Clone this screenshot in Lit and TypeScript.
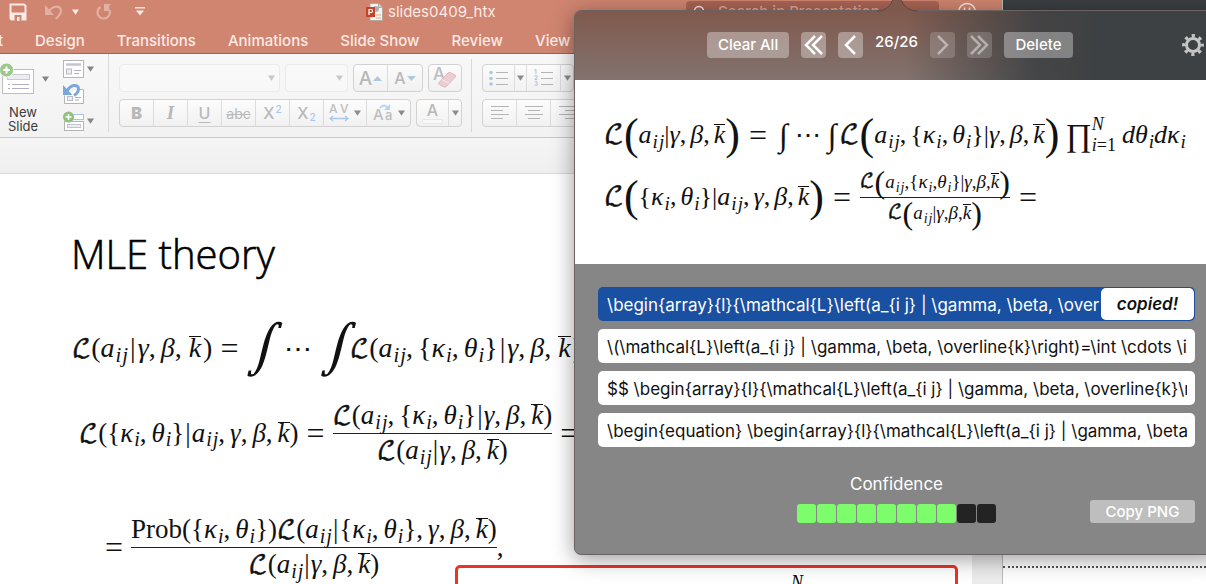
import { LitElement, html, css, svg, nothing, TemplateResult } from "lit";
import { customElement, property } from "lit/decorators.js";

type Part = TemplateResult | string;

/* ---------- math building blocks ---------- */
const sub = (base: Part, idx: string) => html`<i>${base}</i><sub>${idx}</sub>`;
const L = html`<span class="cal">ℒ</span>`;
const comma = html`<span class="comma">,</span>`;
const kbar = html`<span class="kbar"><i>k</i></span>`;
const bar = html`<span class="vbar">|</span>`;
const aij = html`<i>a</i><sub>i</sub><sub>j</sub>`;
const gbk = html`<i>γ</i>${comma}<i>β</i>${comma}${kbar}`;
const kt = html`<span class="brace">{</span>${sub("κ", "i")}${comma}${sub("θ", "i")}<span class="brace">}</span>`;
const t = (p: Part) => html`<span class="t">${p}</span>`;
const rel = html`<span class="rel">=</span>`;
const frac = (n: Part, d: Part) => html`<span class="frac"><span class="num">${n}</span><span class="den">${d}</span></span>`;
const op = html`<span class="big">(</span>`;
const cp = html`<span class="big">)</span>`;
const dots = html`<span class="dots">⋯</span>`;
const int = html`<span class="int">∫</span>`;

const mathStyles = css`
  .eq { display: flex; align-items: center; white-space: nowrap; font-family: "Liberation Serif", serif; color: #111; }
  .t { line-height: 1; }
  sub { font-size: 0.74em; vertical-align: -0.25em; line-height: 0; font-style: italic; margin-left: 1px; }
  .cal { font-family: "DejaVu Math TeX Gyre", "DejaVu Serif", serif; line-height: 0; -webkit-text-stroke: 0.5px #111; }
  .frac { display: flex; flex-direction: column; align-items: center; }
  .num, .den { display: flex; align-items: center; align-self: stretch; justify-content: center; }
  .num { border-bottom: 1px solid #222; }
  .kbar { display: inline-block; border-top: 1px solid #111; line-height: 0.8; }
`;

@customElement("caret-down")
class CaretDown extends LitElement {
  static styles = css`
    :host { display: inline-flex; }
    svg { display: block; }
  `;
  render() {
    return html`<svg width="7" height="6" viewBox="0 0 7 6"><path d="M0 .5h7L3.5 5.8z" fill="currentColor" /></svg>`;
  }
}

@customElement("ppt-ribbon")
class PptRibbon extends LitElement {
  static styles = css`
    :host { display: flex; height: 84px; box-sizing: border-box; border-bottom: 1px solid #c6c6c6; background: linear-gradient(#f8f8f8, #f2f2f2); font-family: Inter, sans-serif; color: #b8b8b8; overflow: hidden; }
    button { font: inherit; color: inherit; background: none; border: 0; padding: 0; margin: 0; display: flex; align-items: center; justify-content: center; }
    svg { display: block; overflow: visible; }
    .new { width: 56px; padding-top: 8px; display: grid; grid-template-columns: 38px 1fr; align-content: start; color: #3b3b3b; font-size: 13px; line-height: 14px; }
    .new .lab { grid-column: 1 / 3; width: 46px; text-align: center; padding-top: 10px; }
    .new caret-down { align-self: center; padding-left: 4px; color: #858585; }
    .slides { display: flex; flex-direction: column; gap: 5px; padding: 4px 16px 0 7px; border-right: 1px solid #d9d9d9; margin: 0 10px 5px 0; width: 29px; }
    .slides button { gap: 3px; height: 22px; justify-content: flex-start; color: #858585; }
    .rows { display: flex; flex-direction: column; gap: 7px; padding-top: 10px; }
    .row { display: flex; gap: 5px; }
    .grp { display: flex; height: 28px; box-sizing: border-box; border: 1px solid #d2d2d2; border-radius: 4px; background: linear-gradient(#fcfcfc, #f1f1f1); }
    .grp button { width: 34px; box-sizing: border-box; border-right: 1px solid #dcdcdc; font-size: 16px; font-weight: 600; gap: 5px; }
    .grp button:last-child { border-right: 0; }
    .grp .wide { width: 43px; }
    .grp .cart { width: 12px; color: #8c8c8c; }
    .grp .dark { color: #8c8c8c; }
    .grp .solo { width: 32px; }
    .combo { height: 28px; box-sizing: border-box; appearance: none; border: 1px solid #e6e6e6; border-radius: 4px; background: #fafafa; width: 100%; }
    .combo-wrap { display: grid; width: 161px; }
    .combo-wrap.small { width: 63px; }
    .combo-wrap > * { grid-area: 1 / 1; }
    .combo-wrap caret-down { justify-self: end; align-self: center; padding-right: 5px; color: #c8c8c8; z-index: 1; }
    .grp .it { font-family: "Liberation Serif", serif; font-style: italic; font-size: 19px; }
    .grp .u { text-decoration: underline; text-underline-offset: 3px; font-weight: 500; }
    .grp .s { text-decoration: line-through; font-size: 14px; font-weight: 400; }
    .grp .x { font-weight: 500; gap: 1px; }
    .grp .lg { font-size: 19px; font-weight: 500; gap: 1px; }
    .sx { font-size: 10px; color: #a9c8ee; align-self: flex-start; padding-top: 3px; }
    .sb { font-size: 10px; color: #a9c8ee; align-self: flex-end; padding-bottom: 3px; }
    .grp .md { font-size: 16px; font-weight: 500; gap: 1px; }
    .ink { display: grid; justify-items: center; line-height: 16px; }
    .ink svg { margin-top: 1px; }
    .para { border-left: 1px solid #d9d9d9; margin: 5px 0 5px 9px; padding: 5px 0 0 10px; }
  `;

  private lines(kind: "left" | "center" | "right") {
    const w = [18, 12, 18, 12];
    return svg`${w.map((n, i) => {
      const x = kind === "left" ? 0 : kind === "center" ? (18 - n) / 2 : 18 - n;
      return svg`<path d="M${x} ${1.5 + i * 4}h${n}" stroke="#b5b5b5" />`;
    })}`;
  }

  render() {
    return html`
      <button class="new">
        <svg width="36" height="33" viewBox="0 0 36 33">
          <rect x="2.5" y="7.500" width="31" height="24" fill="#fff" stroke="#bdbdbd" />
          <rect x="7.500" y="12.500" width="22" height="5" fill="#ececf2" stroke="#c9c9d2" />
          <path d="M8 22.500h2M12 22.500h17M8 26.500h2M12 26.500h17" stroke="#b4afc0" />
          <circle cx="6.500" cy="8" r="7" fill="#9dc88d" stroke="#f8f8f8" />
          <path d="M6.500 4.500v7M3 8h7" stroke="#fff" stroke-width="2" />
        </svg>
        <caret-down></caret-down>
        <span class="lab">New<br />Slide</span>
      </button>
      <div class="slides">
        <button aria-label="Layout">
          <svg width="21" height="18" viewBox="0 0 21 18"><rect x=".5" y=".5" width="20" height="17" fill="#fff" stroke="#b5b5b5" /><path d="M3 4.500h15" stroke="#c4c4cf" stroke-width="2.500" /><rect x="3.500" y="9" width="5" height="5" fill="#ececf2" stroke="#bcbcc8" /><path d="M11 10.500h7M11 13.500h5" stroke="#b4afc0" /></svg>
          <caret-down></caret-down>
        </button>
        <button aria-label="Reset">
          <svg width="21" height="21" viewBox="0 0 21 21"><path d="M16 5.500h4.500v14h-19v-8" fill="#fff" stroke="#b5b5b5" /><rect x="4.500" y="12.500" width="5" height="4" fill="#ececf2" stroke="#bcbcc8" /><path d="M12 13.500h6M12 16h4" stroke="#b4afc0" /><path d="M4 7.500C7 .5 15.500-.5 15.500 5c0 3-2 5-4.500 6.500" fill="none" stroke="#7aa7e0" stroke-width="3" /><path d="M0 1v10h9.500z" fill="#7aa7e0" /></svg>
        </button>
        <button aria-label="Section">
          <svg width="21" height="21" viewBox="0 0 21 21"><rect x="9.500" y="3.500" width="11" height="5" fill="#fff" stroke="#a9c5ea" /><rect x="1.500" y="10.500" width="19" height="9" fill="#fff" stroke="#b5b5b5" /><rect x="4.500" y="13.500" width="13" height="3" fill="#ececf2" stroke="#c4c4cf" /><circle cx="5.500" cy="6" r="5.500" fill="#8fc07e" /><path d="M5.500 3v6M2.500 6h6" stroke="#fff" stroke-width="1.600" /></svg>
          <caret-down></caret-down>
        </button>
      </div>
      <div class="rows">
        <div class="row">
          <span class="combo-wrap"><select class="combo" aria-label="Font" disabled></select><caret-down></caret-down></span>
          <span class="combo-wrap small"><select class="combo" aria-label="Font size" disabled></select><caret-down></caret-down></span>
          <div class="grp">
            <button class="lg" aria-label="Increase font size">A<svg width="9" height="5"><path d="M0 5h9L4.500 0z" fill="#a9c8ee" /></svg></button>
            <button class="md" aria-label="Decrease font size">A<svg width="9" height="5"><path d="M0 0h9L4.500 5z" fill="#abcbe0" /></svg></button>
          </div>
          <div class="grp">
            <button class="solo" aria-label="Clear formatting">
              <svg width="24" height="24" viewBox="0 0 24 24"><text x="0" y="14" font-size="17" font-weight="500" fill="#bdbdbd">A</text><path d="M6 16.500l9-9.500q1-1 2-.5l5 2.500q1 1 .3 2l-9 9.500q-1 1-2 .5l-5-2.500q-1-1-.3-2z" fill="#eccdd2" stroke="#dcb7be" /><path d="M9 13.500l7 4" stroke="#f8e8ea" /></svg>
            </button>
          </div>
        </div>
        <div class="row">
          <div class="grp">
            <button aria-label="Bold"><b>B</b></button>
            <button class="it" aria-label="Italic">I</button>
            <button class="u" aria-label="Underline">U</button>
            <button class="s" aria-label="Strikethrough">abc</button>
            <button class="x" aria-label="Superscript">X<span class="sx">2</span></button>
            <button class="x" aria-label="Subscript">X<span class="sb">2</span></button>
            <button class="wide" aria-label="Character spacing">
              <svg width="20" height="20" viewBox="0 0 20 20"><text x="0" y="10" font-size="12" font-weight="500" fill="#bdbdbd">A</text><text x="11" y="10" font-size="12" font-weight="500" fill="#bdbdbd">V</text><path d="M1 15.500h18M4 13l-3 2.500 3 2.500M16 13l3 2.500-3 2.500" fill="none" stroke="#a9c8ee" stroke-width="1.300" /></svg>
              <caret-down class="dark"></caret-down>
            </button>
            <button class="wide" aria-label="Change case">
              <svg width="20" height="20" viewBox="0 0 20 20"><text x="0" y="17" font-size="15" font-weight="500" fill="#bdbdbd">A</text><text x="12" y="17" font-size="13" font-weight="500" fill="#bdbdbd">a</text><path d="M7 5q4-5 8 0" fill="none" stroke="#b9d2ef" stroke-width="2" /><path d="M17 1v6h-6z" fill="#b9d2ef" /></svg>
              <caret-down class="dark"></caret-down>
            </button>
          </div>
          <div class="grp">
            <button class="solo md" aria-label="Font colour"><span class="ink">A<svg width="21" height="5"><rect x=".5" y=".5" width="20" height="4" rx="1" fill="#f8f8f8" stroke="#e6e6e6" /></svg></span></button>
            <button class="cart" aria-label="Font colour options"><caret-down></caret-down></button>
          </div>
        </div>
      </div>
      <div class="rows para">
        <div class="row">
          <div class="grp">
            <button class="solo" aria-label="Bullets"><svg width="20" height="16" viewBox="0 0 20 16"><circle cx="2" cy="2.500" r="1.800" fill="#a9c8ee" /><circle cx="2" cy="8.500" r="1.800" fill="#a9c8ee" /><circle cx="2" cy="14" r="1.800" fill="#a9c8ee" /><path d="M7 2.500h12M7 8.500h12M7 14.500h12" stroke="#b5b5b5" /></svg></button>
            <button class="cart" aria-label="Bullet options"><caret-down></caret-down></button>
            <button aria-label="Numbering"><svg width="20" height="18" viewBox="0 0 20 18"><g font-size="6" font-weight="700" fill="#a9c8ee"><text x="0" y="5">1</text><text x="0" y="11">2</text><text x="0" y="17">3</text></g><path d="M7 3.500h12M7 9.500h12M7 15.500h12" stroke="#b5b5b5" /></svg></button>
            <button class="cart" aria-label="Numbering options"><caret-down></caret-down></button>
          </div>
        </div>
        <div class="row">
          <div class="grp">
            ${(["left", "center", "right"] as const).map((k) => html`<button aria-label="Align ${k}"><svg width="18" height="16" viewBox="0 0 18 16">${this.lines(k)}</svg></button>`)}
          </div>
        </div>
      </div>
    `;
  }
}

@customElement("slide-canvas")
class SlideCanvas extends LitElement {
  static styles = [
    mathStyles,
    css`
      :host { display: block; position: relative; flex: 1; background: #fff; overflow: hidden; }
      h1 { margin: 0; padding: 55px 0 0 71px; font: 300 40px/50px "Open Sans", sans-serif; color: #000; -webkit-text-stroke: 0.6px #000; }
      .eq { font-size: 27px; height: 60px; }
      .one { margin: 39px 0 25px 72px; font-size: 28px; }
      .two { margin: 0 0 54px 79px; }
      .three { margin: 0 0 0 97px; }
      .cal { font-size: 25px; }
      .comma { margin-right: 5px; }
      .vbar { margin: 0 1px; }
      .rel { margin: 0 8px; font-size: 32px; }
      .one .vbar, .one .kbar { margin: 0 2px; }
      .int { font-family: "DejaVu Math TeX Gyre", serif; font-style: italic; font-size: 50px; line-height: 60px; }
      .dots { margin: 0 8px; }
      .num, .den { height: 34px; }
      .box { position: absolute; left: 455px; top: 391px; right: 14px; height: 90px; box-sizing: border-box; border: 3px solid #e8352a; border-radius: 5px; background: #fff; padding: 4px 0 0 333px; font: italic 18px/20px "Liberation Serif", serif; }
    `,
  ];
  render() {
    return html`
      <h1>MLE theory</h1>
      <div class="eq one">${t(html`${L}(${aij}${bar}${gbk})`)}${rel}${int}${dots}${int}${t(html`${L}(${aij}${comma}${kt}${bar}${gbk})`)}</div>
      <div class="eq two">${t(html`${L}(${kt}${bar}${aij}${comma}${gbk})`)}${rel}${frac(t(html`${L}(${aij}${comma}${kt}${bar}${gbk})`), t(html`${L}(${aij}${bar}${gbk})`))}${rel}</div>
      <div class="eq three">${rel}${frac(t(html`Prob(${kt})${L}(${aij}${bar}${kt}${comma}${gbk})`), t(html`${L}(${aij}${bar}${gbk})`))}${comma}</div>
      <div class="box">N</div>
    `;
  }
}

@customElement("snip-popover")
class SnipPopover extends LitElement {
  @property({ type: Number }) confidence = 8;

  private rows = [
    "\\begin{array}{l}{\\mathcal{L}\\left(a_{i j} | \\gamma, \\beta, \\overline{k}\\right)=\\int \\cdots",
    "\\(\\mathcal{L}\\left(a_{i j} | \\gamma, \\beta, \\overline{k}\\right)=\\int \\cdots \\int",
    "$$ \\begin{array}{l}{\\mathcal{L}\\left(a_{i j} | \\gamma, \\beta, \\overline{k}\\right)=\\int",
    "\\begin{equation} \\begin{array}{l}{\\mathcal{L}\\left(a_{i j} | \\gamma, \\beta, \\overline{k}\\right)",
  ];

  static styles = [
    mathStyles,
    css`
      :host { display: block; box-sizing: border-box; border: 1px solid #6b6361; border-radius: 7px; background: #868686; box-shadow: 0 4px 22px rgba(0, 0, 0, 0.4); font-family: Inter, sans-serif; }
      .tip { position: absolute; left: 302px; top: -11px; display: block; }
      header { display: grid; grid-template-columns: 1fr auto 1fr; align-items: center; height: 69px; box-sizing: border-box; padding: 0 14px 2px 0; border-radius: 6px 0 0 0; background: linear-gradient(90deg, rgba(62, 65, 67, 0) 330px, rgba(62, 65, 67, 0.900) 460px, #3e4143 520px), linear-gradient(#80594d, #82736f); }
      .nav { grid-column: 2; display: flex; align-items: center; gap: 12px; color: #fff; font-size: 16px; font-weight: 500; }
      button { font: inherit; color: #fff; border: 0; padding: 0; border-radius: 4px; background: rgba(255, 255, 255, 0.340); height: 26px; display: flex; align-items: center; justify-content: center; }
      .clear { width: 82px; }
      .del { width: 69px; }
      .clear, .del { font-size: 15px; }
      .sq { width: 25px; }
      .sq[disabled] { background: rgba(255, 255, 255, 0.200); opacity: 0.9; }
      .sq[disabled] path { opacity: 0.5; }
      .count { font-size: 15px; padding-bottom: 6px; }
      .gear { background: none; justify-self: end; }
      svg { display: block; }
      .preview { background: #fff; height: 184px; box-sizing: border-box; padding: 24px 0 0 29px; }
      .preview .eq { font-size: 26px; height: 62px; }
      .big { font-size: 44px; line-height: 50px; }
      .comma { margin-right: 4px; }
      .rel { margin: 0 9px; font-size: 32px; }
      .frac { font-size: 19px; }
      .num, .den { height: 30px; }
      .frac .comma { margin-right: 0; }
      .frac .big { font-size: 32px; line-height: 30px; }
      .int { font-size: 32px; margin: 0 3px; }
      .dots { margin: 0 4px; }
      .prod { font-size: 32px; margin-left: 6px; }
      .lim { display: flex; flex-direction: column; font-size: 18px; line-height: 21px; margin-right: 6px; }
      .body { padding: 23px 24px 0 23px; }
      .codes { display: grid; gap: 8px; }
      .code { display: flex; height: 34px; border-radius: 5px; background: #fff; overflow: hidden; }
      .code input { flex: 1; min-width: 0; border: 0; padding: 1px 0 0; margin: 0 8px 0 9px; background: none; color: #111; font: 17px/34px Inter, sans-serif; outline: 0; }
      .on { background: #1a50a2; }
      .code.on input { color: #fff; margin-right: 0; }
      .badge { width: 93px; margin: 1px; border-radius: 5px; background: #fff; color: #111; font-size: 17px; line-height: 32px; font-weight: 600; font-style: italic; text-align: center; }
      footer { display: grid; grid-template-columns: 1fr auto 1fr; align-items: end; padding-top: 25px; color: #fff; }
      .conf { grid-column: 2; display: grid; gap: 8px; justify-items: center; font-size: 17px; line-height: 24px; }
      .meter { display: flex; gap: 1px; }
      .seg { width: 19px; height: 19px; border-radius: 3px; background: #232323; }
      .seg.full { background: #7dfc6c; }
      .png { justify-self: end; width: 105px; height: 23px; font-size: 15px; font-weight: 500; background: #bfbebe; border-radius: 3px; }
    `,
  ];

  private arrow(d: string) {
    return html`<svg width="23" height="24" viewBox="0 0 23 24"><path d=${d} fill="none" stroke="#fff" stroke-width="2.500" /></svg>`;
  }

  render() {
    return html`
      <svg class="tip" width="40" height="12" viewBox="0 0 40 12"><path d="M0 12Q8 12 13 5L16 0H24L27 5Q32 12 40 12z" fill="#80594d" /><path d="M0 11Q8 11 13 5L16 0M24 0L27 5Q32 11 40 11" fill="none" stroke="#5d4640" /></svg>
      <header>
        <div class="nav">
          <button class="clear">Clear All</button>
          <button class="sq" aria-label="First">${this.arrow("M13 3L4 12L13 21M20 3L11 12L20 21")}</button>
          <button class="sq" aria-label="Previous">${this.arrow("M16 3L7 12L16 21")}</button>
          <span class="count">26/26</span>
          <button class="sq" aria-label="Next" disabled>${this.arrow("M7 3L16 12L7 21")}</button>
          <button class="sq" aria-label="Last" disabled>${this.arrow("M3 3L12 12L3 21M10 3L19 12L10 21")}</button>
          <button class="del">Delete</button>
        </div>
        <button class="gear" aria-label="Settings">
          <svg width="24" height="24" viewBox="0 0 24 24" fill="none" stroke="#c4c5c6"><circle cx="12" cy="12" r="6.500" stroke-width="3" /><circle cx="12" cy="12" r="9.200" stroke-width="3.400" stroke-dasharray="3.200 4.025" stroke-dashoffset="1.600" /></svg>
        </button>
      </header>
      <div class="preview">
        <div class="eq">${L}${op}${t(html`${aij}${bar}${gbk}`)}${cp}${rel}${int}${dots}${int}${L}${op}${t(html`${aij}${comma}${kt}${bar}${gbk}`)}${cp}<span class="prod">∏</span><span class="lim"><i>N</i><span><i>i</i>=1</span></span>${t(html`<i>d</i>${sub("θ", "i")}<i>d</i>${sub("κ", "i")}`)}</div>
        <div class="eq">${L}${op}${t(html`${kt}${bar}${aij}${comma}${gbk}`)}${cp}${rel}${frac(html`${L}${op}${t(html`${aij}${comma}${kt}${bar}${gbk}`)}${cp}`, html`${L}${op}${t(html`${aij}${bar}${gbk}`)}${cp}`)}${rel}</div>
      </div>
      <div class="body">
        <div class="codes">
          ${this.rows.map((r, i) => html`<div class="code ${i === 0 ? "on" : ""}"><input readonly aria-label="LaTeX result ${i + 1}" .value=${r} />${i === 0 ? html`<span class="badge">copied!</span>` : nothing}</div>`)}
        </div>
        <footer>
          <div class="conf">
            <span>Confidence</span>
            <div class="meter" role="meter" aria-label="Confidence" aria-valuenow=${this.confidence} aria-valuemax="10">
              ${Array.from({ length: 10 }, (_, i) => html`<span class="seg ${i < this.confidence ? "full" : ""}"></span>`)}
            </div>
          </div>
          <button class="png">Copy PNG</button>
        </footer>
      </div>
    `;
  }
}

@customElement("app-root")
class AppRoot extends LitElement {
  static styles = css`
    :host { display: grid; grid-template-columns: minmax(0, 1fr) 204px; position: relative; height: 100vh; overflow: hidden; background: #fff; font-family: Inter, sans-serif; }
    .win { display: flex; flex-direction: column; background: #ececec; }
    .top { background: #cf8570; border-bottom: 1px solid #a85f4c; height: 54px; box-sizing: border-box; color: #fbeae5; overflow: hidden; }
    .bar { display: grid; grid-template-columns: 366px 320px 253px 1fr; height: 23px; align-items: center; }
    .qat { display: flex; align-items: center; padding-left: 9px; }
    .qat button { background: none; border: 0; padding: 0; color: inherit; display: flex; }
    .undo { margin-left: 17px; }
    .more { margin-left: 9px; }
    .redo { margin-left: 17px; }
    .cust { margin-left: 22px; }
    svg { display: block; }
    .title { display: flex; align-items: center; gap: 5px; font-size: 15px; line-height: 22px; }
    .search { display: flex; align-items: center; gap: 12px; background: #a96454; height: 22px; border-radius: 4px; padding-left: 6px; min-width: 0; }
    .search input { border: 0; background: none; color: #fff; font: 500 15px/18px Inter, sans-serif; flex: 1; min-width: 0; padding: 0; }
    .search input::placeholder { color: #d9a596; opacity: 1; }
    .smile { padding-left: 18px; }
    nav { display: flex; gap: 32px; line-height: 20px; padding-top: 8px; font-size: 15px; font-weight: 500; }
    nav a { color: inherit; text-decoration: none; white-space: nowrap; }
    nav a:first-child { width: 3px; display: flex; justify-content: flex-end; }
    .gap { height: 36px; background: linear-gradient(#f5f5f5, #efefef); border-bottom: 1px solid #d9d9d9; box-sizing: border-box; }
    .stage { flex: 1; display: flex; min-height: 0; padding-right: 30px; }
    .other { display: flex; flex-direction: column; background: #fff; border-left: 1px solid #bbb; }
    .dark { height: 80px; background: #3b3f42; }
    .doc { flex: 1; }
    .rule { border-top: 2px dotted #555; height: 16px; }
    snip-popover { position: absolute; top: 10px; left: 574px; right: -14px; height: 545px; }
  `;
  render() {
    return html`
      <div class="win">
        <div class="top">
          <div class="bar">
            <div class="qat">
              <button aria-label="Save"><svg width="18" height="18" viewBox="0 0 18 18"><path d="M2.500 1.500h12.500l1.500 1.500v13.500h-14l-1-1v-14z" fill="none" stroke="#fbeae5" stroke-width="2" /><path d="M2 9.500h14v7H2z" fill="#fbeae5" /><path d="M5.500 12h7v6h-7z" fill="#cf8570" /><path d="M8 14h2.500v4H8z" fill="#fbeae5" /></svg></button>
              <button class="undo" aria-label="Undo"><svg width="19" height="17" viewBox="0 0 19 17"><path d="M4 10C8 2 17 2 17 8c0 4-3 5-5 8" fill="none" stroke="#e2b0a2" stroke-width="2.200" /><path d="M1 2v10h9z" fill="#e2b0a2" /></svg></button>
              <button class="more" aria-label="Undo history"><caret-down></caret-down></button>
              <button class="redo" aria-label="Redo"><svg width="17" height="17" viewBox="0 0 17 17"><path d="M4.500 4A6.200 6.200 0 1 0 13.500 7" fill="none" stroke="#e2b0a2" stroke-width="2.200" /><path d="M8 1h7l-2 2 .5 5H8z" fill="#e2b0a2" /></svg></button>
              <button class="cust" aria-label="Customise toolbar"><svg width="10" height="9" viewBox="0 0 10 9"><path d="M0 .800h10" stroke="#fbeae5" stroke-width="1.400" /><path d="M1 3.500h8L5 8.500z" fill="#fbeae5" /></svg></button>
            </div>
            <div class="title">
              <svg width="17" height="18" viewBox="0 0 17 18"><path d="M4 .500h8.500l4 4v13H4z" fill="#f6f2ee" stroke="#b7a59f" /><circle cx="10" cy="6" r="3" fill="#a9b4ba" /><path d="M12.500.500v4h4" fill="#dcd6d2" stroke="#b7a59f" /><path d="M10 12h5M10 15h5" stroke="#e3d3b8" stroke-width="2" /><rect y="4" width="9" height="10" fill="#c64226" /><path d="M3 12V6.500h2.200q1.300 0 1.300 1.500T5.200 9.500H3.500" fill="none" stroke="#fff" stroke-width="1.200" /></svg>
              slides0409_htx
            </div>
            <label class="search"><svg width="14" height="16" viewBox="0 0 14 16"><circle cx="7" cy="7" r="4.500" fill="none" stroke="#fbeae5" stroke-width="1.500" /><path d="M4 10l-3 4" stroke="#fbeae5" /></svg><input placeholder="Search in Presentation" aria-label="Search in Presentation" /></label>
            <div class="smile"><svg width="20" height="20" viewBox="0 0 20 20"><circle cx="10" cy="10" r="8.500" fill="none" stroke="#fbeae5" stroke-width="1.500" /><path d="M7.500 5.500v4M12.500 5.500v4M6 12q4 4 8 0" fill="none" stroke="#fbeae5" stroke-width="1.500" /></svg></div>
          </div>
          <nav>
            <a href="#" aria-label="Insert">t</a><a href="#">Design</a><a href="#">Transitions</a><a href="#">Animations</a><a href="#">Slide Show</a><a href="#">Review</a><a href="#">View</a>
          </nav>
        </div>
        <ppt-ribbon></ppt-ribbon>
        <div class="gap"></div>
        <div class="stage"><slide-canvas></slide-canvas></div>
      </div>
      <div class="other"><div class="dark"></div><div class="doc"></div><div class="rule"></div></div>
      <snip-popover></snip-popover>
    `;
  }
}
